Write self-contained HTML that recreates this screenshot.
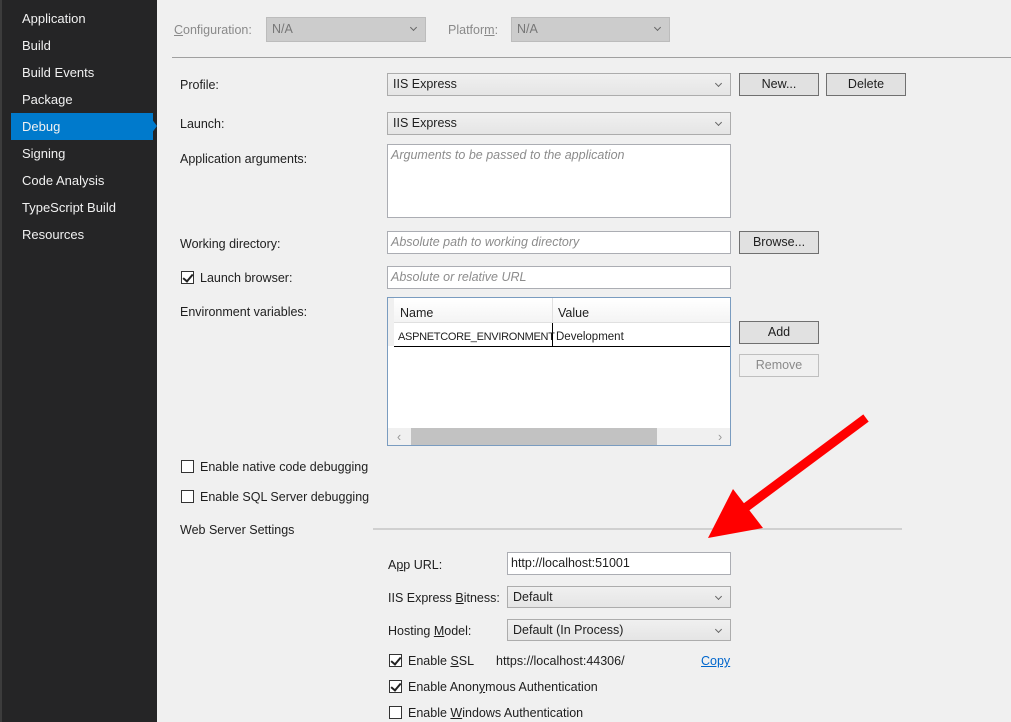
<!DOCTYPE html>
<html><head><meta charset="utf-8"><style>
*{box-sizing:border-box;margin:0;padding:0}
body{width:1011px;height:722px;overflow:hidden;background:#f0f0f0;font-family:"Liberation Sans",sans-serif;font-size:12.5px;color:#1e1e1e;position:relative}
.a{position:absolute}
#side{left:0;top:0;width:157px;height:722px;background:#252526;border-left:2px solid #3c3c3c}
.nav{position:absolute;left:20px;color:#f1f1f1;font-size:13px;line-height:16px}
.l{position:absolute;line-height:16px;white-space:nowrap}
.dd{position:absolute;border:1px solid #acacac;background:linear-gradient(#f0f0f0,#e5e5e5);padding-left:5px;line-height:20px}
.dd:after{content:"";position:absolute;right:9px;top:7px;width:4px;height:4px;border-right:1px solid #666;border-bottom:1px solid #666;transform:rotate(45deg)}
.in{position:absolute;border:1px solid #abadb3;background:#fff;padding-left:3px;line-height:20px;white-space:nowrap}
.ph{color:#8c8c8c;font-style:italic}
.bt{position:absolute;border:1px solid #707070;background:#e1e1e1;text-align:center;line-height:21px}
.cb{position:absolute;width:13px;height:13px;border:1px solid #333;background:#fff}
.cb.c:after{content:"";position:absolute;left:3px;top:0px;width:4px;height:8px;border-right:2px solid #222;border-bottom:2px solid #222;transform:rotate(40deg)}
u{text-decoration:underline}
</style></head><body>
<div id="side" class="a">
<div class="nav" style="top:11px">Application</div>
<div class="nav" style="top:38px">Build</div>
<div class="nav" style="top:65px">Build Events</div>
<div class="nav" style="top:92px">Package</div>
<div class="a" style="left:9px;top:113px;width:142px;height:27px;background:#007acc"></div>
<div class="a" style="left:149px;top:118px;width:0;height:0;border-top:8px solid transparent;border-bottom:8px solid transparent;border-left:6px solid #007acc"></div>
<div class="nav" style="top:119px">Debug</div>
<div class="nav" style="top:146px">Signing</div>
<div class="nav" style="top:173px">Code Analysis</div>
<div class="nav" style="top:200px">TypeScript Build</div>
<div class="nav" style="top:227px">Resources</div>
</div>

<div class="l" style="left:174px;top:22px;color:#8a8a8a"><u>C</u>onfiguration:</div>
<div class="dd" style="left:266px;top:17px;width:160px;height:25px;background:#ccc;border-color:#bcbcbc;color:#777;line-height:23px">N/A</div>
<div class="l" style="left:448px;top:22px;color:#8a8a8a">Platfor<u>m</u>:</div>
<div class="dd" style="left:511px;top:17px;width:159px;height:25px;background:#ccc;border-color:#bcbcbc;color:#777;line-height:23px">N/A</div>
<div class="a" style="left:172px;top:57px;width:839px;height:1px;background:#a0a0a0"></div>

<div class="l" style="left:180px;top:77px">Profile:</div>
<div class="dd" style="left:387px;top:73px;width:344px;height:23px">IIS Express</div>
<div class="bt" style="left:739px;top:73px;width:80px;height:23px">New...</div>
<div class="bt" style="left:826px;top:73px;width:80px;height:23px">Delete</div>

<div class="l" style="left:180px;top:116px">Launch:</div>
<div class="dd" style="left:387px;top:112px;width:344px;height:23px">IIS Express</div>

<div class="l" style="left:180px;top:151px">Application arguments:</div>
<div class="in ph" style="left:387px;top:144px;width:344px;height:74px">Arguments to be passed to the application</div>

<div class="l" style="left:180px;top:236px">Working directory:</div>
<div class="in ph" style="left:387px;top:231px;width:344px;height:23px">Absolute path to working directory</div>
<div class="bt" style="left:739px;top:231px;width:80px;height:23px">Browse...</div>

<div class="cb c" style="left:181px;top:271px"></div>
<div class="l" style="left:200px;top:270px">Launch browser:</div>
<div class="in ph" style="left:387px;top:266px;width:344px;height:23px">Absolute or relative URL</div>

<div class="l" style="left:180px;top:304px">Environment variables:</div>
<div class="a" style="left:387px;top:297px;width:344px;height:149px;border:1px solid #7a9cc0;background:#fff;overflow:hidden">
  <div class="a" style="left:0;top:0;width:6px;height:48px;background:#f0f0f0"></div>
  <div class="a" style="left:6px;top:1px;width:336px;height:24px;background:linear-gradient(#fff,#f4f4f4);border-bottom:1px solid #e0e0e0"></div>
  <div class="a" style="left:164px;top:0;width:1px;height:24px;background:#e0e0e0"></div>
  <div class="l" style="left:12px;top:7px">Name</div>
  <div class="l" style="left:170px;top:7px">Value</div>
  <div class="a" style="left:164px;top:25px;width:1px;height:24px;background:#000"></div>
  <div class="a" style="left:6px;top:48px;width:336px;height:1px;background:#000"></div>
  <div class="l" style="left:10px;top:31px;font-size:11px;letter-spacing:-0.3px">ASPNETCORE_ENVIRONMENT</div>
  <div class="l" style="left:168px;top:31px;font-size:11.5px">Development</div>
  <div class="a" style="left:0;top:130px;width:342px;height:17px;background:#f0f0f0"></div>
  <div class="a" style="left:23px;top:130px;width:246px;height:17px;background:#c2c2c2"></div>
  <div class="l" style="left:9px;top:131px;color:#999">&lsaquo;</div>
  <div class="l" style="left:330px;top:131px;color:#999">&rsaquo;</div>
</div>
<div class="bt" style="left:739px;top:321px;width:80px;height:23px">Add</div>
<div class="bt" style="left:739px;top:354px;width:80px;height:23px;border-color:#bfbfbf;background:#f0f0f0;color:#8a8a8a">Remove</div>

<div class="cb" style="left:181px;top:460px"></div>
<div class="l" style="left:200px;top:459px">Enable native code debugging</div>
<div class="cb" style="left:181px;top:490px"></div>
<div class="l" style="left:200px;top:489px">Enable SQL Server debugging</div>

<div class="l" style="left:180px;top:522px">Web Server Settings</div>
<div class="a" style="left:373px;top:528px;width:529px;height:2px;background:#d0d0d0"></div>

<div class="l" style="left:388px;top:557px">A<u>p</u>p URL:</div>
<div class="in" style="left:507px;top:552px;width:224px;height:23px">http://localhost:51001</div>
<div class="l" style="left:388px;top:590px">IIS Express <u>B</u>itness:</div>
<div class="dd" style="left:507px;top:586px;width:224px;height:22px">Default</div>
<div class="l" style="left:388px;top:623px">Hosting <u>M</u>odel:</div>
<div class="dd" style="left:507px;top:619px;width:224px;height:22px">Default (In Process)</div>

<div class="cb c" style="left:389px;top:654px"></div>
<div class="l" style="left:408px;top:653px">Enable <u>S</u>SL</div>
<div class="l" style="left:496px;top:653px">https://localhost:44306/</div>
<div class="l" style="left:701px;top:653px;color:#0066cc"><u>Copy</u></div>
<div class="cb c" style="left:389px;top:680px"></div>
<div class="l" style="left:408px;top:679px">Enable Anon<u>y</u>mous Authentication</div>
<div class="cb" style="left:389px;top:706px"></div>
<div class="l" style="left:408px;top:705px">Enable <u>W</u>indows Authentication</div>

<svg class="a" style="left:0;top:0" width="1011" height="722">
<line x1="866" y1="418" x2="745" y2="508" stroke="#f00" stroke-width="9"/>
<polygon points="708,538 733,489 763,528" fill="#f00"/>
</svg>
</body></html>
